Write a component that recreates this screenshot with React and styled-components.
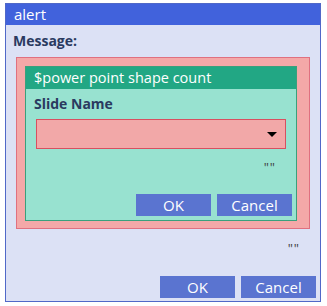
import styled, { createGlobalStyle } from "styled-components";

const Global = createGlobalStyle`
  *, *::before, *::after {
    box-sizing: border-box;
  }
  body {
    margin: 0;
    font-family: "Open Sans", "Noto Sans", sans-serif;
    background: #ffffff;
  }
`;

export default function App() {
  return (
    <>
      <Global />
      <Page>
        <Dialog>
          <TitleBar>alert</TitleBar>
          <Body>
            <Label>Message:</Label>
            <RedBox>
              <InnerDialog>
                <InnerTitle>$power point shape count</InnerTitle>
                <InnerBody>
                  <Label $inner>Slide Name</Label>
                  <Select>
                    <Arrow />
                  </Select>
                  <Quote>""</Quote>
                  <Buttons>
                    <Button>OK</Button>
                    <Button>Cancel</Button>
                  </Buttons>
                </InnerBody>
              </InnerDialog>
            </RedBox>
            <Quote $outer>""</Quote>
            <Buttons $outer>
              <Button>OK</Button>
              <Button>Cancel</Button>
            </Buttons>
          </Body>
        </Dialog>
      </Page>
    </>
  );
}

const Page = styled.div`
  padding: 3px 0 0 5px;
`;

const Dialog = styled.div`
  width: 316px;
  height: 299px;
  border: 1px solid #5068c8;
  background: #dce1f5;
  display: flex;
  flex-direction: column;
`;

const TitleBar = styled.div`
  height: 21px;
  background: #4162dc;
  color: #ffffff;
  font-size: 15px;
  line-height: 21px;
  padding-left: 8px;
`;

const Body = styled.div`
  flex: 1;
  display: flex;
  flex-direction: column;
  padding: 0 4px 0 7px;
`;

const Label = styled.div`
  color: #2a3a60;
  font-weight: 700;
  font-size: 14px;
  line-height: 20px;
  margin: ${(p) => (p.$inner ? "5px 0 5px 0" : "6px 0 6px 0")};
`;

const RedBox = styled.div`
  width: 294px;
  margin-left: 3px;
  background: #f4a8a8;
  border: 1px solid #e07080;
  padding: 8px 12px 7px 8px;
`;

const InnerDialog = styled.div`
  border: 1px solid #3aa07c;
  background: #98e2d0;
  display: flex;
  flex-direction: column;
`;

const InnerTitle = styled.div`
  height: 22px;
  background: #22a784;
  color: #ffffff;
  font-size: 14.5px;
  line-height: 22px;
  padding-left: 8px;
`;

const InnerBody = styled.div`
  display: flex;
  flex-direction: column;
  padding: 0 4px 4px 8px;
`;

const Select = styled.div`
  width: 250px;
  height: 30px;
  margin-left: 2px;
  background: #f2a8a8;
  border: 1px solid #d85060;
  position: relative;
`;

const Arrow = styled.span`
  position: absolute;
  right: 8px;
  top: 12px;
  width: 0;
  height: 0;
  border-left: 5px solid transparent;
  border-right: 5px solid transparent;
  border-top: 5px solid #000000;
`;

const Quote = styled.div`
  align-self: flex-end;
  font-size: 13px;
  letter-spacing: 1px;
  color: #404040;
  line-height: 14px;
  margin: ${(p) => (p.$outer ? "12px 16px 0 0" : "11px 16px 0 0")};
`;

const Buttons = styled.div`
  display: flex;
  justify-content: flex-end;
  gap: 6px;
  margin-top: ${(p) => (p.$outer ? "21px" : "20px")};
`;

const Button = styled.div`
  width: 75px;
  height: 22px;
  background: #5a74d0;
  color: #ffffff;
  font-size: 15px;
  line-height: 22px;
  text-align: center;
`;
